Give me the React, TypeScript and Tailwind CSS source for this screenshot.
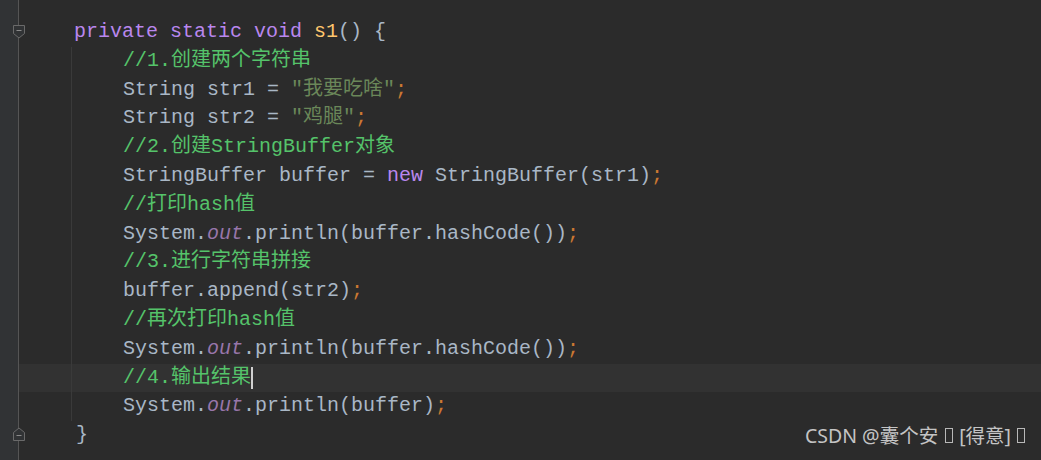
import React from "react";

type Tok = { t: string; c: string };

const KW = "text-[#b987ee]";
const PL = "text-[#a9b7c6]";
const CM = "text-[#55c36a]";
const ST = "text-[#6a8759]";
const SC = "text-[#cc7832]";
const OUT = "text-[#9876aa] italic";
const FN = "text-[#ffc66d]";

const k = (t: string): Tok => ({ t, c: KW });
const p = (t: string): Tok => ({ t, c: PL });
const cm = (t: string): Tok => ({ t, c: CM });
const s = (t: string): Tok => ({ t, c: ST });
const sc = (): Tok => ({ t: ";", c: SC });
const o = (): Tok => ({ t: "out", c: OUT });

const lines: { indent: number; toks: Tok[]; current?: boolean; guide?: boolean }[] = [
  { indent: 0, toks: [k("private static void "), { t: "s1", c: FN }, p("() {")] },
  { indent: 1, guide: true, toks: [cm("//1.创建两个字符串")] },
  { indent: 1, guide: true, toks: [p("String str1 = "), s("\"我要吃啥\""), sc()] },
  { indent: 1, guide: true, toks: [p("String str2 = "), s("\"鸡腿\""), sc()] },
  { indent: 1, guide: true, toks: [cm("//2.创建StringBuffer对象")] },
  { indent: 1, guide: true, toks: [p("StringBuffer buffer = "), k("new "), p("StringBuffer(str1)"), sc()] },
  { indent: 1, guide: true, toks: [cm("//打印hash值")] },
  { indent: 1, guide: true, toks: [p("System."), o(), p(".println(buffer.hashCode())"), sc()] },
  { indent: 1, guide: true, toks: [cm("//3.进行字符串拼接")] },
  { indent: 1, guide: true, toks: [p("buffer.append(str2)"), sc()] },
  { indent: 1, guide: true, toks: [cm("//再次打印hash值")] },
  { indent: 1, guide: true, toks: [p("System."), o(), p(".println(buffer.hashCode())"), sc()] },
  { indent: 1, guide: true, current: true, toks: [cm("//4.输出结果")] },
  { indent: 1, guide: true, toks: [p("System."), o(), p(".println(buffer)"), sc()] },
  { indent: 0, toks: [{ t: "}", c: "text-[#a9b7c6]" }] },
];

function Fold({ up }: { up?: boolean }) {
  return (
    <svg width="14" height="15" viewBox="0 0 14 15" className="block">
      {up ? (
        <path d="M1.5 13.5 V5.5 L7 1 L12.5 5.5 V13.5 Z" fill="#313335" stroke="#6a6a6a" strokeWidth="1" />
      ) : (
        <path d="M1.5 1.5 H12.5 V9.5 L7 14 L1.5 9.5 Z" fill="#313335" stroke="#6a6a6a" strokeWidth="1" />
      )}
      <line x1="4.5" y1={up ? 8.5 : 6.5} x2="9.5" y2={up ? 8.5 : 6.5} stroke="#8a8a8a" strokeWidth="1" />
    </svg>
  );
}

function Tofu() {
  return <span className="inline-block w-[8px] h-[15px] border border-[#b8b8b8] align-[-2px]" />;
}

export default function App() {
  return (
    <div className="w-[1041px] h-[460px] bg-[#2b2b2b] flex overflow-hidden relative">
      <div className="w-[19px] h-full bg-[#313335] border-r border-[#555555] shrink-0 relative">
        <div className="absolute left-[12px] top-[24px]">
          <Fold />
        </div>
        <div className="absolute left-[12px] top-[427px]">
          <Fold up />
        </div>
      </div>
      <div
        className="flex-1 pt-[18px] text-[20px] leading-[28.8px] whitespace-pre"
        style={{ fontFamily: '"Liberation Mono", "Noto Sans CJK SC", monospace' }}
      >
        {lines.map((ln, i) => (
          <div
            key={i}
            className={`relative h-[28.8px] ${ln.current ? "bg-[#323232]" : ""}`}
          >
            {ln.guide && <span className="absolute left-[52px] top-0 bottom-0 w-px bg-[#3a3a3a]" />}
            <div className={`flex items-center h-full ${ln.indent ? "pl-[104px]" : i === 0 ? "pl-[55px]" : "pl-[57px]"}`}>
              {ln.toks.map((tk, j) => (
                <span key={j} className={tk.c}>
                  {tk.t}
                </span>
              ))}
              {ln.current && <span className="inline-block w-[2px] h-[22px] bg-[#d0d0d0]" />}
            </div>
          </div>
        ))}
      </div>
      <div
        className="absolute right-[16px] bottom-[10px] text-[19.5px] text-[#c4c4c4] flex items-center"
        style={{ fontFamily: '"Noto Sans", "Noto Sans CJK SC", sans-serif' }}
      >
        <span>CSDN @囊个安</span>
        <span className="ml-[7px] flex"><Tofu /></span>
        <span className="ml-[6px]">[得意]</span>
        <span className="ml-[6px] flex"><Tofu /></span>
      </div>
    </div>
  );
}
